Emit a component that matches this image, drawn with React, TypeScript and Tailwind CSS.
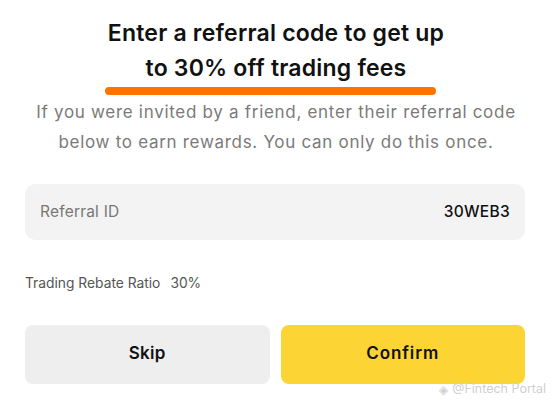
import React from "react";

export default function App() {
  return (
    <div className="w-[552px] h-[410px] bg-white relative overflow-hidden" style={{ fontFamily: "Inter, 'Open Sans', sans-serif" }}>
      <div className="px-[25px] pt-[16px] flex flex-col">
        <h1 className="text-center text-[23px] leading-[35px] font-semibold tracking-[0.2px] text-[#111]">
          Enter a referral code to get up
          <br />
          to 30% off trading fees
        </h1>
        <div className="mt-[1px] ml-[80px] w-[331px] h-[8px] rounded-full bg-[#ff7300]" />
        <p className="mt-[2px] text-center text-[17px] leading-[30px] tracking-[0.7px] text-[#7a7a7a]">
          If you were invited by a friend, enter their referral code
          <br />
          below to earn rewards. You can only do this once.
        </p>
        <div className="mt-[27px] mr-[2px] h-[56px] rounded-[10px] bg-[#f3f3f3] flex items-center justify-between pl-[15px] pr-[15px]">
          <span className="text-[15.5px] tracking-[0.2px] text-[#777]">Referral ID</span>
          <span className="text-[15.5px] font-medium tracking-[0.3px] text-[#111]">30WEB3</span>
        </div>
        <div className="mt-[33px] text-[13.8px] text-[#555] flex gap-[10px]">
          <span>Trading Rebate Ratio</span>
          <span>30%</span>
        </div>
        <div className="mt-[31px] mr-[2px] flex gap-[11px]">
          <button className="flex-1 h-[59px] rounded-[8px] bg-[#eeeeee] text-[17px] font-semibold tracking-[0.3px] text-[#111]">Skip</button>
          <button className="flex-1 h-[59px] rounded-[8px] bg-[#fcd535] text-[17px] font-semibold tracking-[0.9px] text-[#111]">Confirm</button>
        </div>
      </div>
      <div className="absolute right-[6px] bottom-[11px] text-[12.5px] text-[#d0d0d0] flex items-center gap-[4px]">
        <span className="text-[12px]">◈</span>
        <span>@Fintech Portal</span>
      </div>
    </div>
  );
}
